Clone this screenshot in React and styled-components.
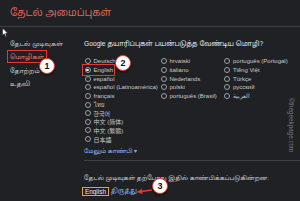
import React from 'react'
import styled, { createGlobalStyle } from 'styled-components'

const GlobalStyle = createGlobalStyle`
  html, body {
    margin: 0;
    padding: 0;
    background: #202124;
  }
  body {
    font-family: "Liberation Sans", "Noto Sans Tamil", "Noto Sans", "Noto Sans CJK SC", sans-serif;
  }
`

const Page = styled.div`
  position: relative;
  width: 300px;
  height: 201px;
  overflow: hidden;
  background: #202124;
`

const Header = styled.div`
  height: 27px;
  box-sizing: border-box;
  border-bottom: 1px solid #3c4043;
  padding-left: 10px;
  display: flex;
  align-items: center;
  font-size: 10px;
  color: #dc6a5e;
`

const Body = styled.div`
  display: flex;
  padding-top: 10px;
`

const Nav = styled.div`
  width: 84px;
  flex-shrink: 0;
  display: flex;
  flex-direction: column;
  align-items: flex-start;
`

const NavItem = styled.div`
  height: 13.3px;
  line-height: 13.3px;
  font-size: 6.3px;
  padding-left: 10px;
  color: ${({ active }) => (active ? '#e8746a' : '#bdc1c6')};
`

const Marked = styled.span`
  outline: ${({ color }) => (color ? `1.5px solid ${color}` : 'none')};
  outline-offset: ${({ offset }) => offset || 2}px;
`

const Content = styled.div`
  flex: 1;
  display: flex;
  flex-direction: column;
`

const Question = styled.div`
  height: 13px;
  line-height: 13px;
  font-size: 6.7px;
  color: #e8eaed;
`

const Options = styled.div`
  display: grid;
  grid-template-columns: 76px 63.5px 1fr;
  margin-top: 7px;
  align-items: start;
`

const Column = styled.div`
  display: flex;
  flex-direction: column;
`

const Option = styled.div`
  height: 8.65px;
  display: flex;
  align-items: center;
  gap: 3px;
  font-size: 6px;
  color: #c6c9cd;
  white-space: nowrap;
  width: max-content;
  outline: ${({ marked }) => (marked ? '1.5px solid #e53935' : 'none')};
  outline-offset: 1px;
`

const Radio = styled.span`
  width: 6px;
  height: 6px;
  box-sizing: border-box;
  border-radius: 50%;
  border: 0.8px solid #9aa0a6;
  display: flex;
  align-items: center;
  justify-content: center;
  margin-left: 0.5px;
  &::after {
    content: '';
    width: 2.6px;
    height: 2.6px;
    border-radius: 50%;
    background: ${({ checked }) => (checked ? '#e8eaed' : 'transparent')};
  }
`

const MoreLink = styled.div`
  margin-top: 3px;
  height: 10px;
  line-height: 10px;
  font-size: 6px;
  color: #8ab4f8;
`

const Divider = styled.div`
  margin-top: 4px;
  height: 1px;
  background: #3c4043;
`

const Current = styled.div`
  margin-top: 12px;
  font-size: 6.1px;
  line-height: 10px;
  color: #c6c9cd;
`

const CurrentRow = styled.div`
  margin-top: 3px;
  display: flex;
  align-items: center;
  gap: 3px;
  font-size: 6.4px;
  height: 10px;
`

const CurrentLang = styled.span`
  color: #e8eaed;
  padding: 0 2px;
  margin-left: -1px;
  outline: 1.5px solid #e6a23c;
  outline-offset: 0.5px;
`

const EditLink = styled.span`
  color: #8ab4f8;
`

const Badge = styled.div`
  position: absolute;
  left: ${({ x }) => x - 8}px;
  top: ${({ y }) => y - 8}px;
  width: 16px;
  height: 16px;
  box-sizing: border-box;
  border-radius: 50%;
  background: #fff;
  border: 1.6px solid #e53935;
  box-shadow: 0 1px 2px rgba(0, 0, 0, 0.6);
  display: flex;
  align-items: center;
  justify-content: center;
  font-size: 9px;
  font-weight: 700;
  color: #111;
`

const Watermark = styled.div`
  position: absolute;
  left: 291px;
  top: 125px;
  transform: translate(-50%, -50%) rotate(90deg);
  font-size: 6.3px;
  color: #7b7e83;
  white-space: nowrap;
`

const Overlay = styled.svg`
  position: absolute;
  left: 0;
  top: 0;
  pointer-events: none;
`

const col1 = ['Deutsch', 'English', 'español', 'español (Latinoamérica)', 'français', 'ไทย', '한국어', '中文 (简体)', '中文 (繁體)', '日本語']
const col2 = ['hrvatski', 'italiano', 'Nederlands', 'polski', 'português (Brasil)']
const col3 = ['português (Portugal)', 'Tiếng Việt', 'Türkçe', 'русский', 'العربية']

function OptionList({ items }) {
  return (
    <Column>
      {items.map(l => (
        <Option key={l} marked={l === 'English'}>
          <Radio checked={l === 'English'} />
          <span>{l}</span>
        </Option>
      ))}
    </Column>
  )
}

export default function App() {
  return (
    <Page>
      <GlobalStyle />
      <Header>தேடல் அமைப்புகள்</Header>
      <Body>
        <Nav>
          <NavItem>தேடல் முடிவுகள்</NavItem>
          <NavItem active>
            <Marked color="#e53935" offset={2}>மொழிகள்</Marked>
          </NavItem>
          <NavItem>தோற்றம்</NavItem>
          <NavItem>உதவி</NavItem>
        </Nav>
        <Content>
          <Question>Google தயாரிப்புகள் பயன்படுத்த வேண்டிய மொழி?</Question>
          <Options>
            <OptionList items={col1} />
            <OptionList items={col2} />
            <OptionList items={col3} />
          </Options>
          <MoreLink>மேலும் காண்பி ▾</MoreLink>
          <Divider />
          <Current>தேடல் முடிவுகள் தற்போது இதில் காண்பிக்கப்படுகின்றன:</Current>
          <CurrentRow>
            <CurrentLang>English</CurrentLang>
            <EditLink>திருத்து</EditLink>
          </CurrentRow>
        </Content>
      </Body>

      <Overlay width="300" height="201" viewBox="0 0 300 201">
        <path d="M2.5 28 L2.5 35.5 L4.3 33.8 L5.6 36.8 L6.7 36.3 L5.5 33.4 L7.8 33.3 Z" fill="#fff" stroke="#000" strokeWidth="0.5" />
        <line x1="152" y1="190" x2="141" y2="191.5" stroke="#e53935" strokeWidth="1.6" />
        <path d="M136.5 192 L142 188.8 L142.6 194.1 Z" fill="#e53935" />
      </Overlay>

      <Badge x={47} y={66}>1</Badge>
      <Badge x={123} y={63}>2</Badge>
      <Badge x={160} y={186}>3</Badge>
      <Watermark>©thegeekpage.com</Watermark>
    </Page>
  )
}
